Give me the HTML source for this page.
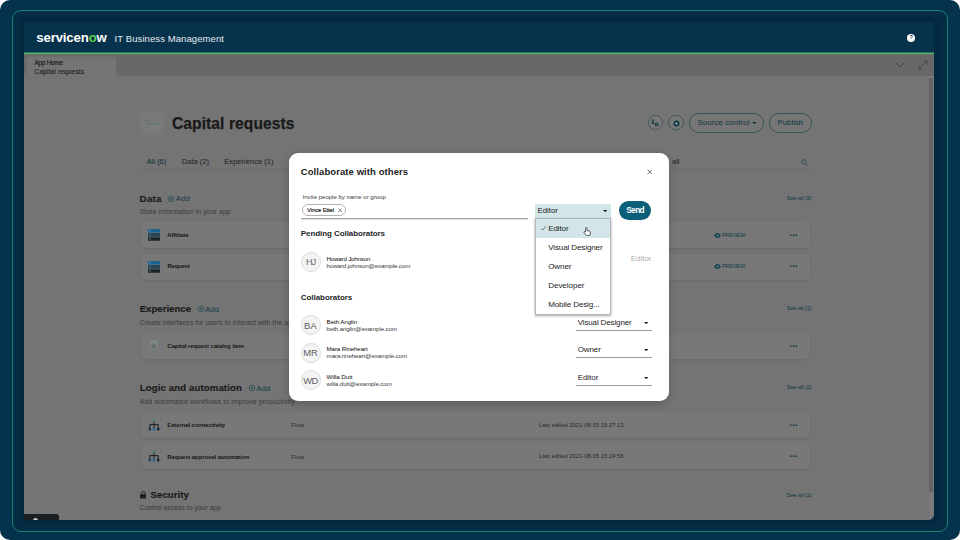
<!DOCTYPE html>
<html lang="en">
<head>
<meta charset="utf-8">
<title>Capital requests - Collaborate with others</title>
<style>
html,body{margin:0;padding:0}
body{width:960px;height:540px;overflow:hidden;background:#fff;font-family:"Liberation Sans", sans-serif;position:relative}
.abs{position:absolute;display:block}
.t{position:absolute;white-space:nowrap;line-height:1;font-family:"Liberation Sans", sans-serif}
.frame{position:absolute;left:0;top:0;width:960px;height:540px;background:#05334d;border-radius:10px;overflow:hidden}
.inner{position:absolute;left:12px;top:10px;width:934px;height:520px;border:1px solid #1a8572;border-radius:9px;background:#052f47;box-sizing:content-box}
.appshadow{position:absolute;left:24px;top:22px;width:910px;height:498px;box-shadow:0 0 8px 5px rgba(2,30,48,.45)}
.app{position:absolute;left:24px;top:22px;width:910px;height:498px;background:#747474;overflow:hidden;border-radius:0 0 6px 0}
.hdr{position:absolute;left:0;top:0;width:910px;height:31px;background:#06324c}
.hline{position:absolute;left:0;top:30.5px;width:910px;height:1.5px;background:#3fae55}
.tabbar{position:absolute;left:0;top:32px;width:910px;height:22px;background:#6c6c6c}
.tab{position:absolute;left:0;top:34.5px;width:92px;height:19.5px;background:#787878;border-radius:3px 4px 0 0}
.page{position:absolute;left:-24px;top:-22px;width:960px;height:540px}
.card{position:absolute;left:140.5px;width:669.5px;background:#787878;border-radius:5px;box-shadow:0 1px 3px rgba(0,0,0,.09)}
.pill{position:absolute;box-sizing:border-box;border:1px solid #36525a;background:#767676;border-radius:12px}
.modal{position:absolute;left:289px;top:153px;width:380px;height:248px;background:#fff;border-radius:9px;box-shadow:0 3px 9px rgba(0,0,0,.2)}
.av{position:absolute;left:300.5px;width:20px;height:20px;box-sizing:border-box;border:1px solid #dcdcdc;border-radius:50%;background:#f4f4f4}
</style>
</head>
<body>
<div class="frame">
 <div class="inner"></div>
 <div class="appshadow"></div>
 <div class="app">
  <div class="page">
  <header>
   <div class="abs" style="left:24px;top:22px;width:910px;height:31px;background:#06324c"></div>
   <span class="t" id="logo" style="left:36.3px;top:30.73px;font-size:13.2px;font-weight:700;color:#ffffff;letter-spacing:-0.146px;">servicen<span style="color:#5fd04f">o</span>w</span><span class="t" id="appname" style="left:114.6px;top:33.86px;font-size:9.5px;font-weight:400;color:#e6edf1;letter-spacing:0.084px;">IT Business Management</span>
   <div class="abs" style="left:907px;top:34px;width:8px;height:8px;border-radius:50%;background:#fff"></div>
   <span class="t" style="left:909.4px;top:35.2px;font-size:5.5px;font-weight:700;color:#05334d">?</span>
   <div class="abs" style="left:24px;top:52px;width:910px;height:3px;background:linear-gradient(#28765a 33.3%,#4aba68 33.3%,#4aba68 66.6%,#5d8568 66.6%)"></div>
  </header>
  <nav>
   <div class="abs" style="left:24px;top:54px;width:910px;height:22px;background:#686868"></div>
   <svg class="abs" style="left:24px;top:56px" width="96" height="20" viewBox="0 0 96 20"><path d="M0 20V18C2 18 2.500 16 2.500 14V4a3.500 3.500 0 0 1 3.500-3.500H88a4 4 0 0 1 4 4V15c0 3 1 5 4 5z" fill="#747474"/></svg>
   <span class="t" id="tab1" style="left:34.6px;top:59.88px;font-size:6.4px;font-weight:400;color:#161616;letter-spacing:-0.263px;-webkit-text-stroke:.12px #161616;">App Home</span><span class="t" id="tab2" style="left:34.6px;top:68.51px;font-size:6.6px;font-weight:400;color:#1e1e1e;letter-spacing:0.121px;-webkit-text-stroke:.12px #1e1e1e;">Capital requests</span>
   <svg class="abs" style="left:895px;top:62px" width="10" height="6" viewBox="0 0 10 6" fill="none" stroke="#444" stroke-width="1"><path d="M1 1l4 4 4-4"/></svg>
   <svg class="abs" style="left:918px;top:60px" width="10" height="10" viewBox="0 0 10 10" fill="none" stroke="#444" stroke-width=".9"><path d="M1 9L9 1M5.5 1H9v3.5M1 5.5V9h3.5"/></svg>
  </nav>
  <main>
   <div class="abs" style="left:929px;top:76px;width:5px;height:444px;background:#797979"></div>
   <div class="abs" style="left:929px;top:78px;width:4px;height:414px;background:#646464"></div>

   <div class="abs" style="left:139.5px;top:111px;width:24.5px;height:24px;border-radius:5px;background:#797979"></div>
   <svg class="abs" style="left:144px;top:117px" width="16" height="11" viewBox="0 0 16 11" fill="none" stroke="#54766a" stroke-width="1"><path d="M3.200 5.300L5.400 7.700H13.300V4.500"/><circle cx="2.600" cy="2.800" r=".85" fill="#4c6d61" stroke="none"/><path d="M5.400 8.900H13.300" stroke="#8ba39a" stroke-width=".5"/></svg>
   <h1 style="margin:0"><span class="t" id="title" style="left:172.0px;top:115.79px;font-size:15.6px;font-weight:700;color:#1a1a1a;letter-spacing:0.073px;-webkit-text-stroke:.25px #1a1a1a;">Capital requests</span></h1>

   <div class="pill" style="left:647.5px;top:115.200px;width:15.300px;height:15.300px;border-radius:50%;background:#797979;border-color:#42585d"></div>
   <svg class="abs" style="left:651px;top:119.400px" width="8" height="8" viewBox="0 0 8 8" fill="#0f3842"><circle cx="1.900" cy="1.200" r=".85"/><path d="M.9 2.400h2v2.600h-2z"/><circle cx="5.700" cy="5.400" r="1.850"/><circle cx="5.700" cy="5.400" r=".75" fill="#797979"/></svg>
   <div class="pill" style="left:668.400px;top:115.200px;width:15.300px;height:15.300px;border-radius:50%;background:#797979;border-color:#42585d"></div>
   <svg class="abs" style="left:672.600px;top:119.800px" width="7" height="7" viewBox="0 0 7 7"><path d="M3.500 .2L6.400 1.850V5.150L3.500 6.800L.6 5.150V1.850z" fill="#0f3842"/><circle cx="3.500" cy="3.500" r="1.250" fill="#8a9ea3"/></svg>
   <div class="pill" style="left:689.2px;top:113.4px;width:74.8px;height:19.6px"></div>
   <span class="t" id="btnsrc" style="left:697.5px;top:119.40px;font-size:7.8px;font-weight:400;color:#0f3442;letter-spacing:0.123px;">Source control</span><svg class="abs" style="left:752.1px;top:122.44999999999999px" width="4.6" height="2.3" viewBox="0 0 10 5"><path d="M0 0h10L5 5z" fill="#0f3442"/></svg>
   <div class="pill" style="left:769.2px;top:113.4px;width:42.8px;height:19.6px"></div>
   <span class="t" id="btnpub" style="left:777.5px;top:119.40px;font-size:7.8px;font-weight:400;color:#0f3442;letter-spacing:0.017px;">Publish</span>

   <span class="t" id="nav1" style="left:146.8px;top:158.28px;font-size:7.7px;font-weight:400;color:#0f2e3a;letter-spacing:-0.083px;">All (6)</span><span class="t" id="nav2" style="left:181.8px;top:158.28px;font-size:7.7px;font-weight:400;color:#222;letter-spacing:-0.073px;">Data (2)</span><span class="t" id="nav3" style="left:224.3px;top:158.28px;font-size:7.7px;font-weight:400;color:#222;letter-spacing:-0.057px;">Experience (1)</span><span class="t" id="srch" style="left:672.0px;top:158.28px;font-size:7.7px;font-weight:400;color:#222;letter-spacing:-0.134px;">all</span>
   <div class="abs" style="left:139.5px;top:169.2px;width:672.5px;height:1px;background:#6b6b6b"></div>
   <svg class="abs" style="left:800.5px;top:158.5px" width="7" height="7" viewBox="0 0 7 7" fill="none" stroke="#27424b" stroke-width=".8"><circle cx="2.8" cy="2.8" r="2.1"/><path d="M4.4 4.4L6.6 6.6"/></svg>

   <section>
    <h2 style="margin:0"><span class="t" id="h_data" style="left:139.6px;top:193.60px;font-size:9.8px;font-weight:700;color:#1c1c1c;letter-spacing:0.238px;-webkit-text-stroke:.2px #1c1c1c;">Data</span></h2><svg class="abs" style="left:166.9px;top:194.5px" width="8" height="8" viewBox="0 0 8 8" fill="none" stroke="#174552" stroke-width=".65"><circle cx="4" cy="4" r="2.9"/><path d="M4 2.600v2.800M2.600 4h2.800"/></svg><span class="t" id="add1" style="left:175.8px;top:195.17px;font-size:7.6px;font-weight:400;color:#0f3a47;letter-spacing:0.228px;">Add</span><span class="t" id="sub_data" style="left:139.7px;top:209.06px;font-size:6.9px;font-weight:400;color:#3a3a3a;letter-spacing:0.090px;">Store information in your app</span><span class="t" id="see1" style="left:786.7px;top:195.67px;font-size:5.7px;font-weight:400;color:#0f3a47;letter-spacing:-0.084px;">See all (2)</span>
    <div class="card" style="top:221.5px;height:26px"></div><svg class="abs" style="left:148px;top:229.2px" width="12" height="12" viewBox="0 0 12 12"><rect x="0" y="0" width="12" height="3.6" rx=".6" fill="#1c6590"/><rect x="0" y="4.1" width="12" height="3.6" rx=".6" fill="#244353"/><rect x="0" y="8.2" width="12" height="3.6" rx=".6" fill="#17242b"/><rect x="1.4" y="1.4" width="1.6" height=".8" fill="#7fb6d6"/><rect x="1.4" y="5.5" width="1.6" height=".8" fill="#7f9aa8"/><rect x="1.4" y="9.6" width="1.6" height=".8" fill="#7f9aa8"/></svg><span class="t" id="r1" style="left:167.3px;top:232.91px;font-size:5.9px;font-weight:700;color:#151515;letter-spacing:-0.045px;">Affiliate</span><svg class="abs" style="left:714.1px;top:232.7px" width="7" height="5" viewBox="0 0 7 5"><path d="M0 2.5C1 .8 2.2 0 3.5 0S6 .8 7 2.5C6 4.2 4.8 5 3.5 5S1 4.2 0 2.5z" fill="#164553"/><circle cx="3.5" cy="2.5" r="1.1" fill="#76797a"/></svg><span class="t" id="pv1" style="left:722.0px;top:233.01px;font-size:5.3px;font-weight:400;color:#0f3a47;letter-spacing:-0.205px;">PREVIEW</span><svg class="abs" style="left:788.7px;top:234.0px" width="9" height="2.4" viewBox="0 0 9 2.4" fill="#143d4a"><circle cx="1.7" cy="1.2" r=".9"/><circle cx="4.5" cy="1.2" r=".9"/><circle cx="7.3" cy="1.2" r=".9"/></svg>
    <div class="card" style="top:253.7px;height:26px"></div><svg class="abs" style="left:148px;top:260.5px" width="12" height="12" viewBox="0 0 12 12"><rect x="0" y="0" width="12" height="3.6" rx=".6" fill="#1c6590"/><rect x="0" y="4.1" width="12" height="3.6" rx=".6" fill="#244353"/><rect x="0" y="8.2" width="12" height="3.6" rx=".6" fill="#17242b"/><rect x="1.4" y="1.4" width="1.6" height=".8" fill="#7fb6d6"/><rect x="1.4" y="5.5" width="1.6" height=".8" fill="#7f9aa8"/><rect x="1.4" y="9.6" width="1.6" height=".8" fill="#7f9aa8"/></svg><span class="t" id="r2" style="left:167.5px;top:264.11px;font-size:5.9px;font-weight:700;color:#151515;letter-spacing:-0.179px;">Request</span><svg class="abs" style="left:714.1px;top:263.9px" width="7" height="5" viewBox="0 0 7 5"><path d="M0 2.5C1 .8 2.2 0 3.5 0S6 .8 7 2.5C6 4.2 4.8 5 3.5 5S1 4.2 0 2.5z" fill="#164553"/><circle cx="3.5" cy="2.5" r="1.1" fill="#76797a"/></svg><span class="t" id="pv2" style="left:722.0px;top:264.11px;font-size:5.3px;font-weight:400;color:#0f3a47;letter-spacing:-0.205px;">PREVIEW</span><svg class="abs" style="left:788.7px;top:265.2px" width="9" height="2.4" viewBox="0 0 9 2.4" fill="#143d4a"><circle cx="1.7" cy="1.2" r=".9"/><circle cx="4.5" cy="1.2" r=".9"/><circle cx="7.3" cy="1.2" r=".9"/></svg>
   </section>
   <section>
    <h2 style="margin:0"><span class="t" id="h_exp" style="left:139.7px;top:303.87px;font-size:9.6px;font-weight:700;color:#1c1c1c;letter-spacing:0.010px;-webkit-text-stroke:.2px #1c1c1c;">Experience</span></h2><svg class="abs" style="left:196.6px;top:305px" width="8" height="8" viewBox="0 0 8 8" fill="none" stroke="#174552" stroke-width=".65"><circle cx="4" cy="4" r="2.9"/><path d="M4 2.600v2.800M2.600 4h2.800"/></svg><span class="t" id="add2" style="left:205.3px;top:305.77px;font-size:7.6px;font-weight:400;color:#0f3a47;letter-spacing:0.128px;">Add</span><span class="t" id="sub_exp" style="left:139.7px;top:320.26px;font-size:6.9px;font-weight:400;color:#3a3a3a;letter-spacing:0.074px;">Create interfaces for users to interact with the app</span><span class="t" id="see2" style="left:786.7px;top:306.17px;font-size:5.7px;font-weight:400;color:#0f3a47;letter-spacing:-0.084px;">See all (1)</span>
    <div class="card" style="top:333.2px;height:25.5px"></div>
    <svg class="abs" style="left:150.400px;top:340.400px" width="7.200" height="9.600" viewBox="0 0 7.2 9.6" fill="none"><path d="M.4.4h6.400v8.800H.400z" fill="#878e8c" stroke="#7f8b88" stroke-width=".5"/><path d="M1.300 5.100h4.600M1.300 6.900h4.600" stroke="#3f4f52" stroke-width=".95"/><path d="M1.300 2h2.400M1.300 3.500h4.600" stroke="#66777b" stroke-width=".7"/><path d="M.8 8.700h5.600" stroke="#55666a" stroke-width=".7"/></svg>
    <span class="t" id="r3" style="left:167.3px;top:344.01px;font-size:5.9px;font-weight:700;color:#151515;letter-spacing:-0.067px;">Capital request catalog item</span><svg class="abs" style="left:788.7px;top:345.1px" width="9" height="2.4" viewBox="0 0 9 2.4" fill="#143d4a"><circle cx="1.7" cy="1.2" r=".9"/><circle cx="4.5" cy="1.2" r=".9"/><circle cx="7.3" cy="1.2" r=".9"/></svg>
   </section>
   <section>
    <h2 style="margin:0"><span class="t" id="h_log" style="left:139.7px;top:383.07px;font-size:9.6px;font-weight:700;color:#1c1c1c;letter-spacing:0.131px;-webkit-text-stroke:.2px #1c1c1c;">Logic and automation</span></h2><svg class="abs" style="left:247.6px;top:384.2px" width="8" height="8" viewBox="0 0 8 8" fill="none" stroke="#174552" stroke-width=".65"><circle cx="4" cy="4" r="2.9"/><path d="M4 2.600v2.800M2.600 4h2.800"/></svg><span class="t" id="add3" style="left:256.6px;top:384.97px;font-size:7.6px;font-weight:400;color:#0f3a47;letter-spacing:0.095px;">Add</span><span class="t" id="sub_log" style="left:139.7px;top:399.06px;font-size:6.9px;font-weight:400;color:#3a3a3a;letter-spacing:0.118px;">Add automated workflows to improve productivity</span><span class="t" id="see3" style="left:786.7px;top:385.37px;font-size:5.7px;font-weight:400;color:#0f3a47;letter-spacing:-0.084px;">See all (2)</span>
    <div class="card" style="top:411.8px;height:26px"></div><svg class="abs" style="left:148px;top:419px" width="12" height="12" viewBox="0 0 12 12" fill="none" stroke="#1b1f21" stroke-width="1"><path d="M6 2.500v3M1.800 9.400V5.600h8.400v3.800M6 5.600v3.800"/><rect x="4.800" y=".3" width="2.400" height="2.400" fill="#3b8568" stroke="none"/><rect x=".6" y="9" width="2.400" height="2.400" fill="#1d3f55" stroke="none"/><rect x="4.800" y="9" width="2.400" height="2.400" fill="#1e6793" stroke="none"/><rect x="9" y="9" width="2.400" height="2.400" fill="#17242c" stroke="none"/></svg><span class="t" id="r4" style="left:167.3px;top:423.21px;font-size:5.9px;font-weight:700;color:#151515;letter-spacing:-0.075px;">External connectivity</span><span class="t" id="f1" style="left:291.2px;top:423.21px;font-size:5.9px;font-weight:400;color:#2a2a2a;letter-spacing:0.141px;">Flow</span><span class="t" id="e1" style="left:539.0px;top:423.46px;font-size:5.6px;font-weight:400;color:#262626;letter-spacing:0.117px;">Last edited 2021-08-05 15:27:13</span><svg class="abs" style="left:788.7px;top:423.8px" width="9" height="2.4" viewBox="0 0 9 2.4" fill="#143d4a"><circle cx="1.7" cy="1.2" r=".9"/><circle cx="4.5" cy="1.2" r=".9"/><circle cx="7.3" cy="1.2" r=".9"/></svg>
    <div class="card" style="top:443px;height:26px"></div><svg class="abs" style="left:148px;top:450.2px" width="12" height="12" viewBox="0 0 12 12" fill="none" stroke="#1b1f21" stroke-width="1"><path d="M6 2.500v3M1.800 9.400V5.600h8.400v3.800M6 5.600v3.800"/><rect x="4.800" y=".3" width="2.400" height="2.400" fill="#3b8568" stroke="none"/><rect x=".6" y="9" width="2.400" height="2.400" fill="#1d3f55" stroke="none"/><rect x="4.800" y="9" width="2.400" height="2.400" fill="#1e6793" stroke="none"/><rect x="9" y="9" width="2.400" height="2.400" fill="#17242c" stroke="none"/></svg><span class="t" id="r5" style="left:167.3px;top:454.61px;font-size:5.9px;font-weight:700;color:#151515;letter-spacing:-0.041px;">Request approval automation</span><span class="t" id="f2" style="left:291.2px;top:454.61px;font-size:5.9px;font-weight:400;color:#2a2a2a;letter-spacing:0.141px;">Flow</span><span class="t" id="e2" style="left:539.0px;top:454.36px;font-size:5.6px;font-weight:400;color:#262626;letter-spacing:0.117px;">Last edited 2021-08-05 15:24:58</span><svg class="abs" style="left:788.7px;top:455.0px" width="9" height="2.4" viewBox="0 0 9 2.4" fill="#143d4a"><circle cx="1.7" cy="1.2" r=".9"/><circle cx="4.5" cy="1.2" r=".9"/><circle cx="7.3" cy="1.2" r=".9"/></svg>
   </section>
   <section>
    <svg class="abs" style="left:139.6px;top:491.2px" width="6.6" height="7.6" viewBox="0 0 6.6 7.6"><rect x="0" y="3.2" width="6.6" height="4.4" rx=".6" fill="#1c1c1c"/><path d="M1.5 3.4V2.4a1.8 1.8 0 0 1 3.6 0v1" fill="none" stroke="#1c1c1c" stroke-width=".9"/></svg>
    <h2 style="margin:0"><span class="t" id="h_sec" style="left:150.6px;top:490.37px;font-size:9.6px;font-weight:700;color:#1c1c1c;letter-spacing:0.066px;-webkit-text-stroke:.2px #1c1c1c;">Security</span></h2><span class="t" id="sub_sec" style="left:139.7px;top:505.46px;font-size:6.9px;font-weight:400;color:#3a3a3a;letter-spacing:-0.026px;">Control access to your app</span><span class="t" id="see4" style="left:786.7px;top:493.17px;font-size:5.7px;font-weight:400;color:#0f3a47;letter-spacing:-0.084px;">See all (1)</span>
   </section>
   <div class="abs" style="left:24px;top:514px;width:34.5px;height:6px;background:#1a1f22;border-radius:0 3px 0 0"></div>
   <div class="abs" style="left:33px;top:518.300px;width:5px;height:5px;border-radius:50%;background:#c4c4c4"></div>
  </main>

  <div class="modal" role="dialog"></div>
  <div class="dlg">
   <h3 style="margin:0"><span class="t" id="m_title" style="left:300.8px;top:167.16px;font-size:9.5px;font-weight:700;color:#1c1c1c;letter-spacing:0.079px;">Collaborate with others</span></h3>
   <svg class="abs" style="left:646.6px;top:169.4px" width="5.6" height="5.6" viewBox="0 0 6 6" fill="none" stroke="#444" stroke-width=".8"><path d="M.5.5l5 5M5.500 .5l-5 5"/></svg>
   <span class="t" id="m_inv" style="left:302.6px;top:194.24px;font-size:6.1px;font-weight:400;color:#3c3c3c;letter-spacing:-0.027px;">Invite people by name or group</span>
   <div class="abs" style="left:302px;top:204.200px;width:44.300px;height:11.800px;box-sizing:border-box;border:1px solid #b4b4b4;border-radius:6px;background:#fff"></div>
   <span class="t" id="m_chip" style="left:307.0px;top:207.22px;font-size:6.0px;font-weight:400;color:#1a1a1a;letter-spacing:-0.143px;-webkit-text-stroke:.15px #1a1a1a;">Vince Ettel</span>
   <svg class="abs" style="left:337.600px;top:208px" width="4.4" height="4.400" viewBox="0 0 6 6" fill="none" stroke="#444" stroke-width=".9"><path d="M.5.5l5 5M5.500 .5l-5 5"/></svg>
   <div class="abs" style="left:301px;top:218px;width:227px;height:2px;background:linear-gradient(#a8a8a8 50%,#dedede 50%)"></div>
   <div class="abs" style="left:535.4px;top:203.6px;width:76px;height:14.5px;background:#d2e6ea"></div>
   <div class="abs" style="left:535.4px;top:217.6px;width:76px;height:1px;background:#47666f"></div>
   <span class="t" id="m_sel" style="left:537.4px;top:207.43px;font-size:8.0px;font-weight:400;color:#1c1c1c;letter-spacing:-0.051px;">Editor</span><svg class="abs" style="left:603.4px;top:210.3px" width="4.4" height="2.2" viewBox="0 0 10 5"><path d="M0 0h10L5 5z" fill="#222"/></svg>
   <div class="abs" style="left:618.8px;top:200.5px;width:32.6px;height:19px;border-radius:9.5px;background:#0c5f78"></div>
   <span class="t" id="m_send" style="left:626.2px;top:206.07px;font-size:8.3px;font-weight:700;color:#fff;letter-spacing:-0.599px;">Send</span>
   <h4 style="margin:0"><span class="t" id="m_pend" style="left:300.8px;top:230.23px;font-size:8.0px;font-weight:700;color:#1f1f1f;letter-spacing:-0.076px;">Pending Collaborators</span></h4>
   <div class="av" style="top:252px"></div><span class="t" id="m_hj" style="left:306.0px;top:257.78px;font-size:9.0px;font-weight:400;color:#6a6a6a;letter-spacing:-0.700px;">HJ</span><span class="t" id="m_n1" style="left:326.6px;top:255.55px;font-size:6.2px;font-weight:400;color:#0c0c0c;letter-spacing:-0.203px;">Howard Johnson</span><span class="t" id="m_e1" style="left:326.6px;top:262.75px;font-size:6.2px;font-weight:400;color:#3a3a3a;letter-spacing:-0.122px;">howard.johnson@example.com</span><span class="t" id="m_ed" style="left:630.8px;top:255.23px;font-size:8.0px;font-weight:400;color:#b0b0b0;letter-spacing:-0.034px;">Editor</span>
   <h4 style="margin:0"><span class="t" id="m_col" style="left:300.8px;top:293.63px;font-size:8.0px;font-weight:700;color:#1f1f1f;letter-spacing:-0.047px;">Collaborators</span></h4>
   <div class="av" style="top:315px"></div><span class="t" id="m_av0" style="left:304.0px;top:320.54px;font-size:9.4px;font-weight:400;color:#606060;letter-spacing:0.242px;">BA</span><span class="t" id="m_nm0" style="left:326.6px;top:318.55px;font-size:6.2px;font-weight:400;color:#0c0c0c;letter-spacing:-0.083px;">Beth Anglin</span><span class="t" id="m_em0" style="left:326.6px;top:325.75px;font-size:6.2px;font-weight:400;color:#3a3a3a;letter-spacing:-0.137px;">beth.anglin@example.com</span><span class="t" id="m_s0" style="left:577.7px;top:318.63px;font-size:8.0px;font-weight:400;color:#1c1c1c;letter-spacing:-0.133px;">Visual Designer</span><svg class="abs" style="left:643.5px;top:321.7px" width="4.4" height="2.2" viewBox="0 0 10 5"><path d="M0 0h10L5 5z" fill="#222"/></svg><div class="abs" style="left:575.8px;top:330px;width:75.9px;height:1px;background:#9c9c9c"></div>
   <div class="av" style="top:342.5px"></div><span class="t" id="m_av1" style="left:303.2px;top:348.04px;font-size:9.4px;font-weight:400;color:#606060;letter-spacing:0.003px;">MR</span><span class="t" id="m_nm1" style="left:326.6px;top:346.05px;font-size:6.2px;font-weight:400;color:#0c0c0c;letter-spacing:-0.125px;">Mara Rineheart</span><span class="t" id="m_em1" style="left:326.6px;top:353.25px;font-size:6.2px;font-weight:400;color:#3a3a3a;letter-spacing:-0.113px;">mara.rineheart@example.com</span><span class="t" id="m_s1" style="left:577.7px;top:346.13px;font-size:8.0px;font-weight:400;color:#1c1c1c;letter-spacing:-0.093px;">Owner</span><svg class="abs" style="left:643.5px;top:349.2px" width="4.4" height="2.2" viewBox="0 0 10 5"><path d="M0 0h10L5 5z" fill="#222"/></svg><div class="abs" style="left:575.8px;top:357px;width:75.9px;height:1px;background:#9c9c9c"></div>
   <div class="av" style="top:370px"></div><span class="t" id="m_av2" style="left:303.2px;top:375.54px;font-size:9.4px;font-weight:400;color:#606060;letter-spacing:-0.512px;">WD</span><span class="t" id="m_nm2" style="left:326.6px;top:373.55px;font-size:6.2px;font-weight:400;color:#0c0c0c;letter-spacing:-0.058px;">Willa Dutt</span><span class="t" id="m_em2" style="left:326.6px;top:380.75px;font-size:6.2px;font-weight:400;color:#3a3a3a;letter-spacing:-0.089px;">willa.dutt@example.com</span><span class="t" id="m_s2" style="left:577.7px;top:373.63px;font-size:8.0px;font-weight:400;color:#1c1c1c;letter-spacing:-0.051px;">Editor</span><svg class="abs" style="left:643.5px;top:376.7px" width="4.4" height="2.2" viewBox="0 0 10 5"><path d="M0 0h10L5 5z" fill="#222"/></svg><div class="abs" style="left:575.8px;top:385px;width:75.9px;height:1px;background:#9c9c9c"></div>
   <div class="abs" style="left:535.2px;top:218.4px;width:76.2px;height:97px;box-sizing:border-box;border:1px solid #b5b5b5;background:#fff;box-shadow:0 1px 2.5px rgba(0,0,0,.35)"></div>
   <div class="abs" style="left:536.2px;top:219.4px;width:74.2px;height:18.4px;background:#d2e6ea"></div>
   <svg class="abs" style="left:540.8px;top:226.2px" width="5.200" height="4.6" viewBox="0 0 5.2 4.6" fill="none" stroke="#333" stroke-width=".7"><path d="M.4 2.6L1.800 4 4.800 .4"/></svg>
   <span class="t" id="m_d0" style="left:548.2px;top:224.83px;font-size:8.0px;font-weight:400;color:#1c1c1c;letter-spacing:-0.101px;">Editor</span><span class="t" id="m_d1" style="left:548.2px;top:243.73px;font-size:8.0px;font-weight:400;color:#1c1c1c;letter-spacing:-0.106px;">Visual Designer</span><span class="t" id="m_d2" style="left:548.2px;top:262.73px;font-size:8.0px;font-weight:400;color:#1c1c1c;letter-spacing:-0.053px;">Owner</span><span class="t" id="m_d3" style="left:548.2px;top:281.63px;font-size:8.0px;font-weight:400;color:#1c1c1c;letter-spacing:-0.019px;">Developer</span><span class="t" id="m_d4" style="left:548.2px;top:300.53px;font-size:8.0px;font-weight:400;color:#1c1c1c;letter-spacing:-0.108px;">Mobile Desig...</span>
   <svg class="abs" style="left:582.6px;top:227px" width="8" height="9" viewBox="0 0 8 9" fill="#fff" stroke="#222" stroke-width=".7" stroke-linejoin="round"><path d="M2.6 5V1.200a.7.700 0 0 1 1.400 0V3.600l2.600.5a1 1 0 0 1 .8 1L7 8.400H3.200L1 5.600a.7.700 0 0 1 1-.9z"/></svg>
  </div>
  </div>
 </div>
</div>
</body>
</html>
